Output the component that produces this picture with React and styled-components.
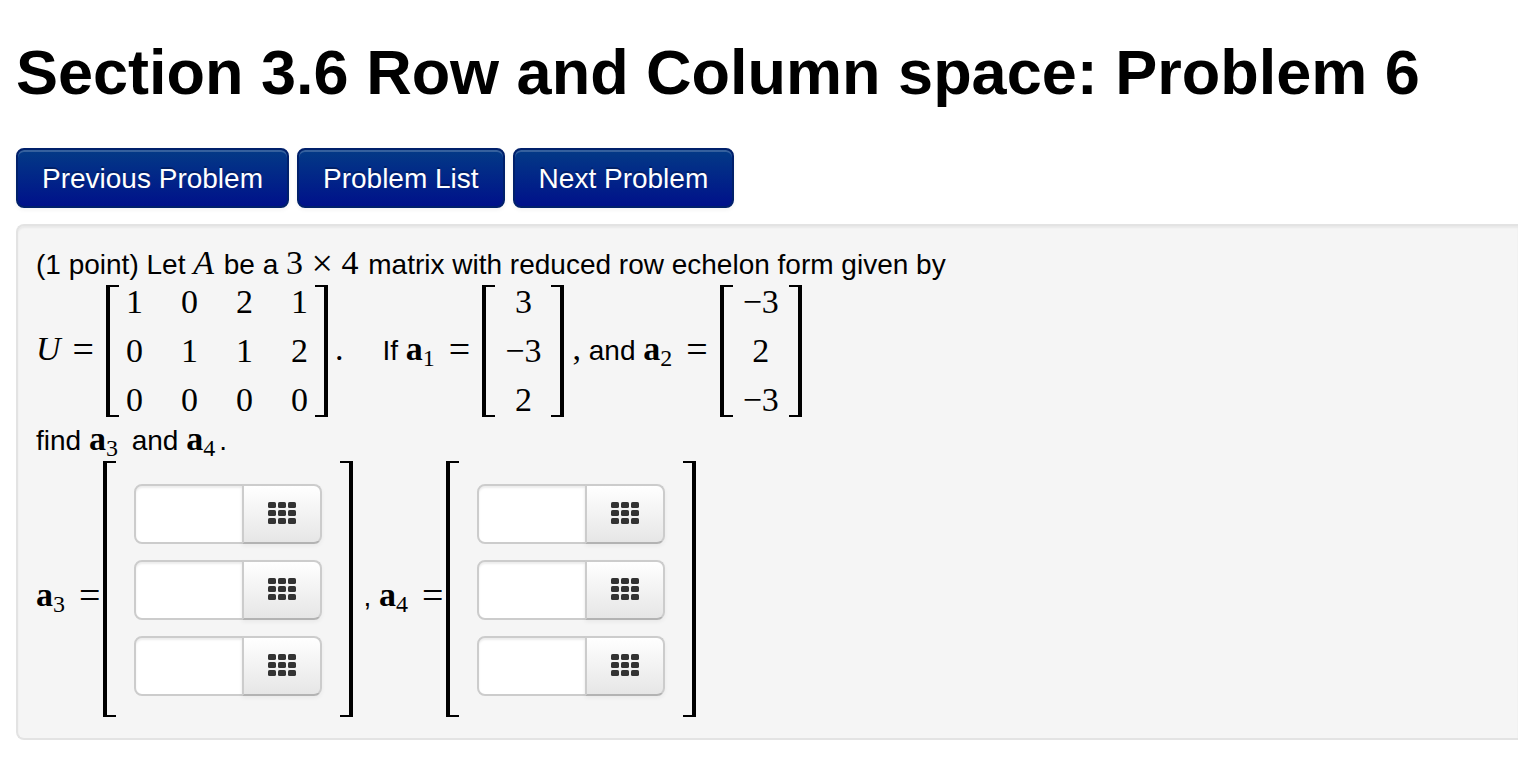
import React from 'react'
import styled, { createGlobalStyle } from 'styled-components'

const GlobalStyle = createGlobalStyle`
  * {
    box-sizing: border-box;
  }
  body {
    margin: 0;
    background: #fff;
    color: #000;
    font-family: 'Liberation Sans', Arial, sans-serif;
    font-size: 28px;
    line-height: 40px;
  }
`
const Page = styled.main`
  padding: 32px 0 28px 16px;
`
const Title = styled.h1`
  margin: 0 0 36px;
  font-size: 63px;
  line-height: 80px;
  font-weight: bold;
`
const Nav = styled.nav`
  display: flex;
  flex-wrap: wrap;
  gap: 8px;
  margin-bottom: 16px;
`
const NavButton = styled.a`
  padding: 9px 24px 7px;
  border: 2px solid #00206b;
  border-radius: 8px;
  background: linear-gradient(to bottom, #033a86, #00118a);
  box-shadow: inset 0 2px 0 rgba(255, 255, 255, 0.2),
    0 2px 4px rgba(0, 0, 0, 0.05);
  color: #fff;
  text-decoration: none;
  text-shadow: 0 -2px 0 rgba(0, 0, 0, 0.25);
`
const Problem = styled.section`
  padding: 19px 18px 21px;
  border: 2px solid #e3e3e3;
  border-right: none;
  border-radius: 8px 0 0 8px;
  background: #f5f5f5;
  box-shadow: inset 0 2px 2px rgba(0, 0, 0, 0.05);
`
const Line = styled.p`
  margin: 0;
`
const MatrixLine = styled.div`
  display: flex;
  align-items: center;
  padding-bottom: 4px;
`
const AnswerLine = styled.div`
  display: flex;
  align-items: center;
`
const Text = styled.span`
  white-space: pre;
  margin-left: ${props => props.$before || 0}px;
  margin-right: ${props => props.$after || 0}px;
`
// labels beside the answer boxes sit a little under the middle
const AnswerText = styled(Text)`
  padding-top: 16px;
`
const MathText = styled.span`
  font-family: 'Liberation Serif', 'Times New Roman', serif;
  font-size: 34px;
  line-height: 32px;
`
const Variable = styled(MathText)`
  margin-right: 2px;
  font-style: italic;
`
const Operator = styled(MathText)`
  font-size: 38px;
  line-height: 0;
  vertical-align: -2px;
`
const Vector = styled(MathText)`
  font-weight: bold;

  sub {
    font-size: 24px;
    font-weight: normal;
    line-height: 0;
    vertical-align: -6px;
  }
`
const Relation = styled(Operator)`
  margin: 0 ${props => (props.$tight ? 3 : 12)}px 0
    ${props => (props.$wide ? 14 : 10)}px;
`
const Bracketed = styled.div`
  display: flex;
  align-items: stretch;
`
const Bracket = styled.span`
  width: 13px;
  border: solid #000;
  border-width: ${props => (props.$right ? '2px 4px 2px 0' : '2px 0 2px 4px')};
`
const Cells = styled.div`
  display: grid;
  grid-template-columns: repeat(${props => props.$columns}, auto);
  gap: 17px 38px;
  padding: 1px ${props => (props.$columns > 1 ? 7 : 10)}px;
  justify-items: center;
  font-family: 'Liberation Serif', 'Times New Roman', serif;
  font-size: 34px;
  line-height: 32px;
`
const AnswerCells = styled.div`
  display: grid;
  gap: 16px;
  padding: 23px 18px 21px;
`
const InputGroup = styled.div`
  display: flex;
  height: 60px;
`
const AnswerInput = styled.input`
  width: 110px;
  padding: 8px 12px;
  border: 2px solid #ccc;
  border-radius: 8px 0 0 8px;
  background: #fff;
  box-shadow: inset 0 2px 2px rgba(0, 0, 0, 0.075);
  font: inherit;
`
const KeypadButton = styled.button`
  display: flex;
  align-items: center;
  justify-content: center;
  width: 80px;
  margin-left: -2px;
  padding: 0 0 2px;
  border: 2px solid #ccc;
  border-bottom-color: #b3b3b3;
  border-radius: 0 8px 8px 0;
  background: linear-gradient(to bottom, #fff, #e6e6e6);
  box-shadow: 0 2px 4px rgba(0, 0, 0, 0.05);
  cursor: pointer;
`

const links = ['Previous Problem', 'Problem List', 'Next Problem']

const KeypadIcon = () => (
  <svg width="28" height="22" viewBox="0 0 28 22" fill="#333" aria-hidden="true">
    {[0, 8, 16].map(y =>
      [0, 10, 20].map(x => (
        <rect key={`${x}-${y}`} x={x} y={y} width="8" height="6" rx="1.6" />
      ))
    )}
  </svg>
)

const Matrix = ({ rows }) => (
  <Bracketed>
    <Bracket />
    <Cells $columns={rows[0].length}>
      {rows.map((row, i) => row.map((n, j) => <span key={`${i}-${j}`}>{n}</span>))}
    </Cells>
    <Bracket $right />
  </Bracketed>
)

const AnswerVector = ({ name }) => (
  <Bracketed>
    <Bracket />
    <AnswerCells>
      {[1, 2, 3].map(n => (
        <InputGroup key={n}>
          <AnswerInput type="text" aria-label={`${name} entry ${n}`} />
          <KeypadButton type="button" aria-label={`Equation editor for ${name} entry ${n}`}>
            <KeypadIcon />
          </KeypadButton>
        </InputGroup>
      ))}
    </AnswerCells>
    <Bracket $right />
  </Bracketed>
)

const VectorName = ({ index }) => (
  <Vector>
    a<sub>{index}</sub>
  </Vector>
)

const App = () => (
  <>
    <GlobalStyle />
    <Page>
      <Title>Section 3.6 Row and Column space: Problem 6</Title>
      <Nav>
        {links.map(label => (
          <NavButton href="#" key={label}>
            {label}
          </NavButton>
        ))}
      </Nav>
      <Problem>
        <Line>
          (1 point) Let <Variable>A</Variable> be a{' '}
          <MathText>
            3 <Operator>×</Operator> 4
          </MathText>{' '}
          <Text $before={2}>matrix with reduced row echelon form given by</Text>
        </Line>
        <MatrixLine>
          <Text>
            <Variable>U</Variable>
            <Relation>=</Relation>
          </Text>
          <Matrix rows={[[1, 0, 2, 1], [0, 1, 1, 2], [0, 0, 0, 0]]} />
          <Text $before={7} $after={39}>
            <MathText>.</MathText>
          </Text>
          <Text>
            If <VectorName index={1} />
            <Relation $wide>=</Relation>
          </Text>
          <Matrix rows={[[3], ['−3'], [2]]} />
          <Text $before={8}>
            <MathText>,</MathText> and <VectorName index={2} />
            <Relation $wide>=</Relation>
          </Text>
          <Matrix rows={[['−3'], [2], ['−3']]} />
        </MatrixLine>
        <Line>
          find <VectorName index={3} />
          <Text $before={6}> and </Text>
          <VectorName index={4} />
          <Text $before={4}>.</Text>
        </Line>
        <AnswerLine>
          <AnswerText>
            <VectorName index={3} />
            <Relation $wide $tight>=</Relation>
          </AnswerText>
          <AnswerVector name="a3" />
          <AnswerText $before={10}>
            , <VectorName index={4} />
            <Relation $wide $tight>=</Relation>
          </AnswerText>
          <AnswerVector name="a4" />
        </AnswerLine>
      </Problem>
    </Page>
  </>
)

export default App
